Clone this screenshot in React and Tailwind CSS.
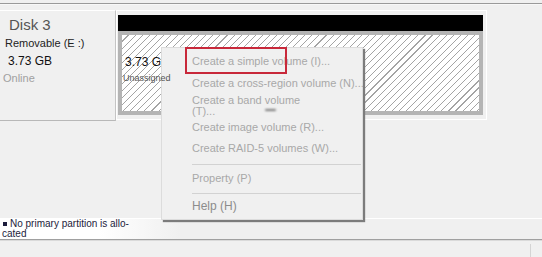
export default function App() {
  const item = "pl-[30px] text-[11px] leading-[13px] text-[#a8a8a8] whitespace-nowrap flex items-center";
  return (
    <div className="relative w-[542px] h-[257px] overflow-hidden bg-[#f0f0f0] font-['Liberation_Sans',Arial,sans-serif] flex flex-col">
      <div className="h-[3px] shrink-0" />
      <div className="h-px bg-[#9a9a9a] shrink-0" />
      <div className="h-px bg-[#f8f8f8] shrink-0" />
      <div className="h-[5px] shrink-0" />
      <div className="flex items-start h-[111px] shrink-0">
        <div className="w-[116px] h-[111px] border-t border-t-white border-r border-r-[#c4c4c4] border-b border-b-[#b8b8b8] flex flex-col">
          <div className="mt-[5px] pl-[9px] text-[15px] leading-[17px] text-[#555]">Disk 3</div>
          <div className="mt-[4px] pl-[5px] text-[11px] leading-[13px] text-[#222]">Removable (E :)</div>
          <div className="mt-[4px] pl-[8px] text-[12px] leading-[14px] text-[#111]">3.73 GB</div>
          <div className="mt-[4px] pl-[3px] text-[11px] leading-[13px] text-[#a0a0a0]">Online</div>
        </div>
        <div className="w-[371px] h-[110px] border border-white pt-[4px] pl-[1px] pr-[3px] pb-[4px] flex flex-col">
          <div className="h-[16px] bg-black shrink-0" />
          <div className="flex-1 border-4 border-[#b4b4b4] bg-[repeating-linear-gradient(135deg,#ffffff_0px,#ffffff_4.2px,#a4a4a4_4.2px,#a4a4a4_5px)] flex flex-col">
            <div className="mt-[20px] pl-[3px] text-[12px] leading-[14px] text-[#111] whitespace-nowrap">3.73 GB</div>
            <div className="mt-[4px] pl-[1px] text-[9px] leading-[11px] text-[#555] whitespace-nowrap">
              <span className="relative z-20">Unassigned</span>
            </div>
          </div>
        </div>
      </div>
      <div className="h-[97px] shrink-0" />
      <div className="h-px bg-white shrink-0" />
      <div className="h-[20px] shrink-0 w-[180px] bg-linear-to-r from-white from-55% to-[#f0f0f0] text-[10px] leading-[10px] text-[#1c1c3c] whitespace-nowrap">
        <span className="inline-block w-[4px] h-[4px] bg-[#1c1c3c] ml-[3px] mr-[3px] align-[1px]" />
        No primary partition is allo-
        <br />
        <span className="pl-[2px]">cated</span>
      </div>
      <div className="h-px bg-[#a0a0a0] shrink-0" />
      <div className="h-px bg-[#dadada] shrink-0" />
      <div className="flex-1 flex justify-end">
        <div className="w-px bg-[#d4d4d4] mr-[11px] mt-[3px]" />
      </div>

      <div className="absolute z-10 left-[161px] top-[47px] w-[202px] h-[173px] bg-[#f0f0f0] border border-[#dcdcdc] shadow-[2px_2px_1px_#7c7c7c] flex flex-col">
        <div className={item + " h-[26px]"}>Create a simple volume (I)...</div>
        <div className={item + " h-[19px]"}>Create a cross-region volume (N)...</div>
        <div className="pl-[30px] text-[11px] leading-[11px] text-[#a8a8a8] whitespace-nowrap flex items-center h-[26px]">
          <div>
            Create a band volume
            <br />
            (T)...
          </div>
        </div>
        <div className={item + " h-[16px]"}>Create image volume (R)...</div>
        <div className={item + " h-[26px]"}>Create RAID-5 volumes (W)...</div>
        <div className="h-[6px] flex items-center pl-[30px] pr-[1px]">
          <div className="h-px w-full bg-[#d2d2d2]" />
        </div>
        <div className={item + " h-[22px]"}>Property (P)</div>
        <div className="h-[8px] flex items-center pl-[30px] pr-[1px]">
          <div className="h-px w-full bg-[#d2d2d2]" />
        </div>
        <div className="pl-[30px] text-[12px] leading-[14px] text-[#8c8c8c] flex items-center h-[18px]">Help (H)</div>
        <div className="absolute left-[23px] top-[-1px] w-[102px] h-[27px] border-2 border-[#c8283a]" />
        <div className="absolute left-[103px] top-[61px] w-[11px] h-[2px] rounded-full bg-[#777] blur-[1px]" />
      </div>
    </div>
  );
}
